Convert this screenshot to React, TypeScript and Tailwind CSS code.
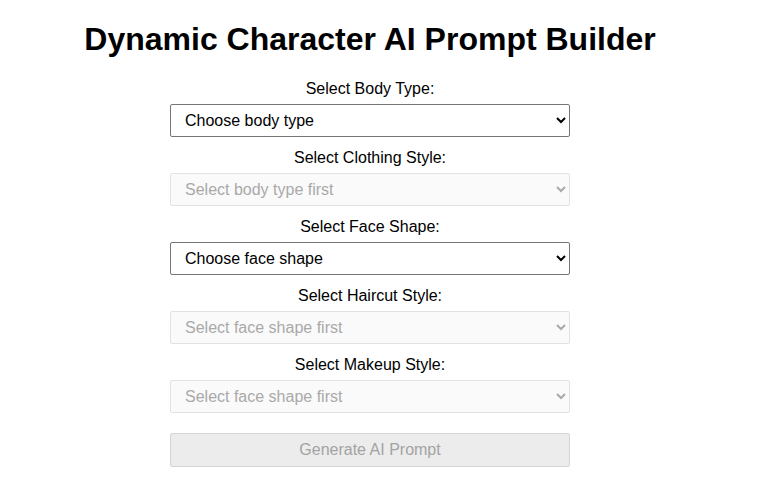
import { useState } from "react";

const bodyTypes = ["Slim", "Athletic", "Curvy", "Muscular", "Plus-size"];
const faceShapes = ["Oval", "Round", "Square", "Heart", "Diamond"];

function Field({
  label,
  placeholder,
  options,
  disabled,
  value,
  onChange,
}: {
  label: string;
  placeholder: string;
  options: string[];
  disabled?: boolean;
  value: string;
  onChange: (v: string) => void;
}) {
  return (
    <div className="flex flex-col items-center">
      <label className="block pt-px leading-[18px] mb-[6px] text-black">{label}</label>
      <select
        disabled={disabled}
        value={value}
        onChange={(e) => onChange(e.target.value)}
        className={
          disabled
            ? "w-[400px] h-[33px] px-[10px] border border-[#e2e2e2] rounded-[2px] bg-[#fafafa] text-[#a9a9a9]"
            : "w-[400px] h-[33px] px-[10px] border border-[#767676] rounded-[2px] bg-white text-black"
        }
      >
        <option value="">{placeholder}</option>
        {options.map((o) => (
          <option key={o} value={o}>
            {o}
          </option>
        ))}
      </select>
    </div>
  );
}

export default function App() {
  const [body, setBody] = useState("");
  const [clothing, setClothing] = useState("");
  const [face, setFace] = useState("");
  const [hair, setHair] = useState("");
  const [makeup, setMakeup] = useState("");

  const ready = body && clothing && face && hair && makeup;

  return (
    <div className="w-[740px] bg-white text-[16px] font-['Liberation_Sans',Arial,sans-serif]">
      <h1 className="text-center text-[32px] font-bold leading-[37px] my-[21px] text-black">
        Dynamic Character AI Prompt Builder
      </h1>
      <div className="flex flex-col items-center gap-[11px]">
        <Field label="Select Body Type:" placeholder="Choose body type" options={bodyTypes} value={body} onChange={setBody} />
        <Field
          label="Select Clothing Style:"
          placeholder="Select body type first"
          options={body ? ["Casual", "Formal", "Streetwear"] : []}
          disabled={!body}
          value={clothing}
          onChange={setClothing}
        />
        <Field label="Select Face Shape:" placeholder="Choose face shape" options={faceShapes} value={face} onChange={setFace} />
        <Field
          label="Select Haircut Style:"
          placeholder="Select face shape first"
          options={face ? ["Bob", "Pixie", "Long layers"] : []}
          disabled={!face}
          value={hair}
          onChange={setHair}
        />
        <Field
          label="Select Makeup Style:"
          placeholder="Select face shape first"
          options={face ? ["Natural", "Glam", "Bold"] : []}
          disabled={!face}
          value={makeup}
          onChange={setMakeup}
        />
        <button
          disabled={!ready}
          className="mt-[9px] w-[400px] h-[34px] border border-[#d4d4d4] rounded-[2px] bg-[#ececec] text-[#a3a3a3]"
        >
          Generate AI Prompt
        </button>
      </div>
    </div>
  );
}
